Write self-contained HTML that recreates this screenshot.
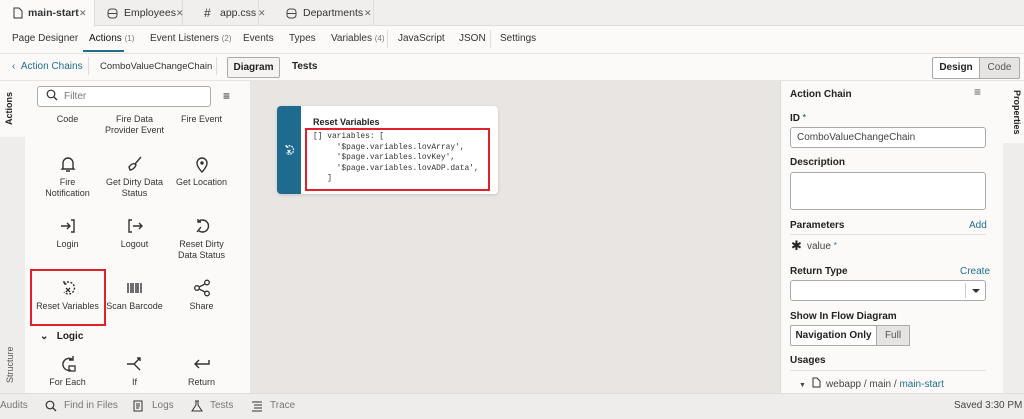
<!DOCTYPE html>
<html><head><style>
*{box-sizing:border-box;margin:0;padding:0}
html,body{width:1024px;height:419px;overflow:hidden}
body{font-family:"Liberation Sans",sans-serif;font-size:11px;color:#222;background:#fbfaf9;position:relative}
.a{position:absolute;white-space:nowrap}
.tt{position:absolute;top:7px;font-size:10.5px;color:#333;white-space:nowrap}
.tx{position:absolute;top:8px;font-size:9px;color:#666}
.nav{position:absolute;top:33px;font-size:10px;color:#333;white-space:nowrap}
.nav span{color:#777;font-size:8px}
.it{position:absolute;width:67px;text-align:center;font-size:9px;color:#333;line-height:11px}
.ic{position:absolute;width:20px;height:20px}
.lbl{font-size:10px;font-weight:bold;color:#222;position:absolute;white-space:nowrap}
.inp{position:absolute;border:1px solid #aaa;border-radius:3px;background:#fff}
.mono{font-family:"Liberation Mono",monospace;font-size:8px;color:#333;line-height:10.5px;white-space:pre}
.bt{position:absolute;top:393px;font-size:10px;color:#777;line-height:26px;white-space:nowrap}
</style></head><body>
<!-- top tabs -->
<div class="a" style="left:0;top:0;width:1024px;height:26px;background:#f1efed;border-bottom:1px solid #ddd"></div>
<div class="a" style="left:0;top:0;width:95px;height:27px;background:#fbfaf9;border-right:1px solid #ddd"></div>
<svg class="a" style="left:13px;top:7px" width="10" height="12"><path d="M1 1h5l3 3v7H1z" fill="none" stroke="#333"/></svg>
<div class="tt" style="left:28px;font-weight:bold">main-start</div><div class="tx" style="left:79px">✕</div>
<div class="a" style="left:182px;top:0;width:1px;height:26px;background:#ddd"></div>
<div class="a" style="left:258px;top:0;width:1px;height:26px;background:#ddd"></div>
<svg class="a" style="left:107px;top:8px" width="11" height="11"><rect x="1" y="1" width="9" height="9" rx="3" fill="none" stroke="#444"/><path d="M1 5.5h9" stroke="#444"/></svg>
<div class="tt" style="left:124px">Employees</div><div class="tx" style="left:176px">✕</div>
<div class="tt" style="left:204px;font-size:12px;top:6px">#</div>
<div class="tt" style="left:220px">app.css</div><div class="tx" style="left:258px">✕</div>
<svg class="a" style="left:286px;top:8px" width="11" height="11"><rect x="1" y="1" width="9" height="9" rx="3" fill="none" stroke="#444"/><path d="M1 5.5h9" stroke="#444"/></svg>
<div class="tt" style="left:303px">Departments</div><div class="tx" style="left:364px">✕</div>
<div class="a" style="left:373px;top:0;width:1px;height:26px;background:#ddd"></div>
<!-- nav -->
<div class="nav" style="left:12px">Page Designer</div>
<div class="nav" style="left:89px;color:#111">Actions <span>(1)</span></div>
<div class="a" style="left:83px;top:50px;width:41px;height:2px;background:#1f6f8b"></div>
<div class="nav" style="left:150px">Event Listeners <span>(2)</span></div>
<div class="nav" style="left:243px">Events</div>
<div class="nav" style="left:289px">Types</div>
<div class="nav" style="left:331px">Variables <span>(4)</span></div>
<div class="a" style="left:387px;top:30px;width:1px;height:18px;background:#ddd"></div>
<div class="nav" style="left:398px">JavaScript</div>
<div class="nav" style="left:459px">JSON</div>
<div class="a" style="left:490px;top:30px;width:1px;height:18px;background:#ddd"></div>
<div class="nav" style="left:500px">Settings</div>
<div class="a" style="left:0;top:53px;width:1024px;height:1px;background:#e6e3e0"></div>
<!-- subbar -->
<div class="a" style="left:12px;top:61px;font-size:10px;color:#1f6f8b">‹ &nbsp;Action Chains</div>
<div class="a" style="left:88px;top:57px;width:1px;height:18px;background:#ddd"></div>
<div class="a" style="left:100px;top:61px;font-size:9.5px;color:#333">ComboValueChangeChain</div>
<div class="a" style="left:216px;top:57px;width:1px;height:18px;background:#ddd"></div>
<div class="a" style="left:227px;top:57px;width:53px;height:21px;border:1px solid #aaa;border-radius:2px;background:#f4f3f1;font-size:10px;font-weight:bold;text-align:center;line-height:19px">Diagram</div>
<div class="a" style="left:292px;top:61px;font-size:10px;font-weight:bold">Tests</div>
<div class="a" style="left:932px;top:57px;width:48px;height:22px;border:1px solid #aaa;border-radius:2px 0 0 2px;background:#fff;font-size:10px;font-weight:bold;text-align:center;line-height:20px">Design</div>
<div class="a" style="left:979px;top:57px;width:41px;height:22px;border:1px solid #aaa;border-radius:0 2px 2px 0;background:#e6e4e2;font-size:10px;color:#555;text-align:center;line-height:20px">Code</div>
<div class="a" style="left:0;top:80px;width:1024px;height:1px;background:#e6e3e0"></div>
<!-- left rail -->
<div class="a" style="left:0;top:81px;width:25px;height:312px;background:#efedeb"></div>
<div class="a" style="left:0;top:81px;width:25px;height:56px;background:#fbfaf9"></div>
<div class="a" style="left:4px;top:125px;transform:rotate(-90deg);transform-origin:0 0;font-size:9px;font-weight:bold;width:40px">Actions</div>
<div class="a" style="left:5px;top:383px;transform:rotate(-90deg);transform-origin:0 0;font-size:9px;color:#555;width:50px">Structure</div>
<!-- palette -->
<div class="inp" style="left:37px;top:86px;width:174px;height:21px"></div>
<svg class="a" style="left:46px;top:89px" width="12" height="12"><circle cx="5" cy="5" r="3.8" fill="none" stroke="#333" stroke-width="1.2"/><path d="M8 8l3 3" stroke="#333" stroke-width="1.3"/></svg>
<div class="a" style="left:64px;top:91px;font-size:10px;color:#777">Filter</div>
<div class="a" style="left:223px;top:89px;font-size:12px">≡</div>
<div class="it" style="left:34px;top:114px">Code</div>
<div class="it" style="left:101px;top:114px">Fire Data<br>Provider Event</div>
<div class="it" style="left:168px;top:114px">Fire Event</div>
<svg class="ic" style="left:58px;top:154px" viewBox="0 0 20 20"><path d="M5 14V9a5 5 0 0110 0v5l1 1H4z M8 17h4" fill="none" stroke="#333" stroke-width="1.4"/></svg>
<svg class="ic" style="left:125px;top:154px" viewBox="0 0 20 20"><path d="M16 3l-6 7 M4 13c3-4 6-4 7-2-1 3-4 5-6 5z" fill="none" stroke="#333" stroke-width="1.4"/></svg>
<svg class="ic" style="left:192px;top:154px" viewBox="0 0 20 20"><path d="M10 18s-5-5-5-9a5 5 0 0110 0c0 4-5 9-5 9z" fill="none" stroke="#333" stroke-width="1.4"/><circle cx="10" cy="9" r="1.7" fill="#333"/></svg>
<div class="it" style="left:34px;top:177px">Fire<br>Notification</div>
<div class="it" style="left:101px;top:177px">Get Dirty Data<br>Status</div>
<div class="it" style="left:168px;top:177px">Get Location</div>
<svg class="ic" style="left:58px;top:216px" viewBox="0 0 20 20"><path d="M3 10h9 M9 7l3 3-3 3 M13 4h3v12h-3" fill="none" stroke="#333" stroke-width="1.4"/></svg>
<svg class="ic" style="left:125px;top:216px" viewBox="0 0 20 20"><path d="M7 4H4v12h3 M8 10h9 M14 7l3 3-3 3" fill="none" stroke="#333" stroke-width="1.4"/></svg>
<svg class="ic" style="left:192px;top:216px" viewBox="0 0 20 20"><path d="M6 6a6 6 0 110 8 M6 3v3h3 M5 16l4-5" fill="none" stroke="#333" stroke-width="1.4"/></svg>
<div class="it" style="left:34px;top:239px">Login</div>
<div class="it" style="left:101px;top:239px">Logout</div>
<div class="it" style="left:168px;top:239px">Reset Dirty<br>Data Status</div>
<div class="a" style="left:30px;top:269px;width:76px;height:57px;border:2px solid #e0202a"></div>
<svg class="ic" style="left:58px;top:278px" viewBox="0 0 20 20"><path d="M6 6a6 6 0 110 8 M6 3v3h3" fill="none" stroke="#333" stroke-width="1.4" stroke-dasharray="2 1.5"/><path d="M8 10l4 4 M12 10l-4 4" stroke="#333" stroke-width="1.3"/></svg>
<svg class="ic" style="left:125px;top:278px" viewBox="0 0 20 20"><path d="M3 5v10 M6 5v10 M8 5v10 M11 5v10 M13 5v10 M16 5v10" stroke="#333" stroke-width="1.4"/></svg>
<svg class="ic" style="left:192px;top:278px" viewBox="0 0 20 20"><circle cx="5" cy="10" r="2.3" fill="none" stroke="#333" stroke-width="1.3"/><circle cx="15" cy="4.5" r="2.3" fill="none" stroke="#333" stroke-width="1.3"/><circle cx="15" cy="15.5" r="2.3" fill="none" stroke="#333" stroke-width="1.3"/><path d="M7 9l6-3 M7 11l6 3" stroke="#333" stroke-width="1.3"/></svg>
<div class="it" style="left:34px;top:301px">Reset Variables</div>
<div class="it" style="left:101px;top:301px">Scan Barcode</div>
<div class="it" style="left:168px;top:301px">Share</div>
<div class="a" style="left:40px;top:331px;font-size:10px;font-weight:bold">⌄&nbsp;&nbsp; Logic</div>
<svg class="ic" style="left:58px;top:354px" viewBox="0 0 20 20"><path d="M15 6a6 6 0 10-2 10 M15 2v4h-4" fill="none" stroke="#333" stroke-width="1.4"/><rect x="11" y="12" width="6" height="5" fill="none" stroke="#333" stroke-width="1.3"/></svg>
<svg class="ic" style="left:125px;top:354px" viewBox="0 0 20 20"><path d="M2 10h7l6-6 M9 10l6 6 M12 4h3v3" fill="none" stroke="#333" stroke-width="1.4"/></svg>
<svg class="ic" style="left:192px;top:354px" viewBox="0 0 20 20"><path d="M17 6v4H3 M7 6l-4 4 4 4" fill="none" stroke="#333" stroke-width="1.4"/></svg>
<div class="it" style="left:34px;top:377px">For Each</div>
<div class="it" style="left:101px;top:377px">If</div>
<div class="it" style="left:168px;top:377px">Return</div>
<!-- canvas -->
<div class="a" style="left:250px;top:81px;width:530px;height:312px;background:#e8e5e2"></div>
<div class="a" style="left:277px;top:106px;width:221px;height:88px;background:#fff;border-radius:4px;box-shadow:0 1px 3px rgba(0,0,0,.15);overflow:hidden"></div>
<div class="a" style="left:277px;top:106px;width:24px;height:88px;background:#1f6b8f;border-radius:4px 0 0 4px"></div>
<svg class="a" style="left:282px;top:143px" width="14" height="14" viewBox="0 0 20 20"><path d="M6 6a6 6 0 110 8 M6 3v3h3" fill="none" stroke="#fff" stroke-width="1.8" stroke-dasharray="2.5 1.5"/><path d="M8 10l4 4 M12 10l-4 4" stroke="#fff" stroke-width="1.6"/></svg>
<div class="a" style="left:313px;top:117px;font-size:9px;font-weight:bold">Reset Variables</div>
<div class="a" style="left:305px;top:128px;width:185px;height:63px;border:2px solid #e0202a"></div>
<div class="a mono" style="left:313px;top:132px;font-size:7.9px">[] variables: [
     '$page.variables.lovArray',
     '$page.variables.lovKey',
     '$page.variables.lovADP.data',
   ]</div>
<!-- right panel -->
<div class="a" style="left:780px;top:81px;width:1px;height:312px;background:#ddd"></div>
<div class="a" style="left:1003px;top:81px;width:21px;height:312px;background:#efedeb"></div>
<div class="a" style="left:1003px;top:81px;width:21px;height:62px;background:#fbfaf9"></div>
<div class="a" style="left:1022px;top:90px;transform:rotate(90deg);transform-origin:0 0;font-size:9px;font-weight:bold;width:60px">Properties</div>
<div class="lbl" style="left:790px;top:89px">Action Chain</div>
<div class="a" style="left:974px;top:85px;font-size:12px;color:#555">≡</div>
<div class="lbl" style="left:790px;top:113px">ID <span style="color:#1f6f8b;font-size:8px;vertical-align:top">*</span></div>
<div class="inp" style="left:790px;top:127px;width:196px;height:21px"></div>
<div class="a" style="left:797px;top:132px;font-size:10px;color:#444">ComboValueChangeChain</div>
<div class="lbl" style="left:790px;top:157px">Description</div>
<div class="inp" style="left:790px;top:172px;width:196px;height:38px"></div>
<div class="lbl" style="left:790px;top:220px">Parameters</div>
<div class="a" style="left:969px;top:220px;font-size:10px;color:#1f6f8b">Add</div>
<div class="a" style="left:790px;top:234px;width:196px;height:1px;background:#e3e1df"></div>
<div class="a" style="left:791px;top:238px;font-size:13px">✱</div>
<div class="a" style="left:807px;top:241px;font-size:10px;color:#444">value <span style="color:#1f6f8b;font-size:8px;vertical-align:top">*</span></div>
<div class="lbl" style="left:790px;top:266px">Return Type</div>
<div class="a" style="left:960px;top:266px;font-size:10px;color:#1f6f8b">Create</div>
<div class="inp" style="left:790px;top:280px;width:196px;height:21px"></div>
<div class="a" style="left:965px;top:283px;width:1px;height:15px;background:#ccc"></div>
<div class="a" style="left:972px;top:289px;border-left:4px solid transparent;border-right:4px solid transparent;border-top:4px solid #333"></div>
<div class="lbl" style="left:790px;top:311px">Show In Flow Diagram</div>
<div class="a" style="left:790px;top:325px;width:87px;height:21px;border:1px solid #aaa;border-radius:2px 0 0 2px;background:#fff;font-size:10px;font-weight:bold;text-align:center;line-height:19px">Navigation Only</div>
<div class="a" style="left:876px;top:325px;width:34px;height:21px;border:1px solid #aaa;background:#e6e4e2;font-size:10px;color:#555;text-align:center;line-height:19px">Full</div>
<div class="lbl" style="left:790px;top:355px">Usages</div>
<div class="a" style="left:790px;top:370px;width:196px;height:1px;background:#e3e1df"></div>
<div class="a" style="left:799px;top:377px;font-size:10px;color:#444"><span style="font-size:7px">▼</span> &nbsp;<svg width="9" height="11" style="vertical-align:-1px"><path d="M1 1h4l3 3v6H1z" fill="none" stroke="#333"/></svg>&nbsp; webapp / main / <span style="color:#1f6f8b">main-start</span></div>
<!-- bottom -->
<div class="a" style="left:0;top:393px;width:1024px;height:26px;background:#efedeb;border-top:1px solid #ddd"></div>
<div class="bt" style="left:0">Audits</div>
<svg class="a" style="left:45px;top:400px" width="12" height="12"><circle cx="5" cy="5" r="3.8" fill="none" stroke="#333" stroke-width="1.2"/><path d="M8 8l3 3" stroke="#333" stroke-width="1.3"/></svg>
<div class="bt" style="left:64px">Find in Files</div>
<svg class="a" style="left:133px;top:400px" width="11" height="12"><rect x="1" y="1" width="8" height="10" fill="none" stroke="#333"/><path d="M3 4h4M3 6h4M3 8h3" stroke="#333"/></svg>
<div class="bt" style="left:152px">Logs</div>
<svg class="a" style="left:191px;top:400px" width="12" height="12"><path d="M4 1h4M5 1v4L1 11h10L7 5V1" fill="none" stroke="#333"/></svg>
<div class="bt" style="left:210px">Tests</div>
<svg class="a" style="left:251px;top:400px" width="12" height="12"><path d="M1 2h10M3 5h8M3 8h8M1 11h10" stroke="#333"/></svg>
<div class="bt" style="left:270px">Trace</div>
<div class="bt" style="left:954px;color:#444">Saved 3:30 PM</div>
</body></html>
